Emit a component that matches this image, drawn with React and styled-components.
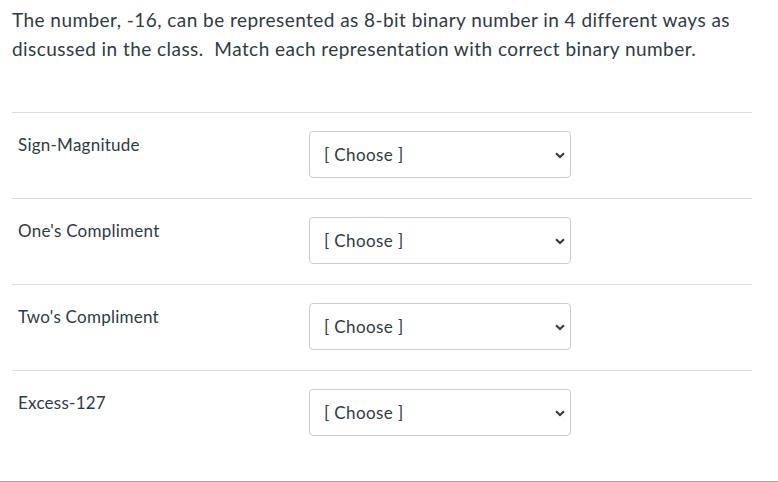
import React from "react";
import styled, { createGlobalStyle } from "styled-components";

const GlobalStyle = createGlobalStyle`
  body {
    margin: 0;
    background: #fff;
    font-family: Lato, "Liberation Sans", sans-serif;
    color: #2d3b45;
  }
`;

const Page = styled.div`
  padding-top: 5px;
`;

const Question = styled.div`
  padding: 0 26px 25px 12px;
`;

const Prompt = styled.p`
  margin: 0 0 49px;
  font-size: 19px;
  line-height: 29px;
  letter-spacing: 0.45px;
`;

const Row = styled.div`
  box-sizing: border-box;
  height: 86px;
  border-top: 1px solid #dcdfe1;
  display: grid;
  grid-template-columns: 291px 262px;
  padding-left: 6px;
`;

const Label = styled.div`
  padding-top: 20px;
  font-size: 17px;
  line-height: 24px;
  letter-spacing: 0.25px;
`;

const SelectWrap = styled.div`
  position: relative;
  margin-top: 18px;
  height: 47px;
`;

const Select = styled.select`
  appearance: none;
  -webkit-appearance: none;
  box-sizing: border-box;
  width: 100%;
  height: 100%;
  border: 1px solid #c7cdd1;
  border-radius: 4px;
  background: #fff;
  padding: 0 30px 0 14px;
  font-family: Lato, "Liberation Sans", sans-serif;
  font-size: 17px;
  letter-spacing: 0.4px;
  color: #2d3b45;
`;

const Chevron = styled.svg`
  position: absolute;
  right: 6px;
  top: 21px;
  pointer-events: none;
`;

const BottomRule = styled.div`
  border-top: 1px solid #a5acb0;
`;

const items = ["Sign-Magnitude", "One's Compliment", "Two's Compliment", "Excess-127"];

const App = () => {
  return (
    <Page>
      <GlobalStyle />
      <Question>
        <Prompt>
          The number, -16, can be represented as 8-bit binary number in 4 different ways as
          discussed in the class.&nbsp; Match each representation with correct binary number.
        </Prompt>
        {items.map((item) => (
          <Row key={item}>
            <Label>{item}</Label>
            <SelectWrap>
              <Select defaultValue="">
                <option value="">[ Choose ]</option>
              </Select>
              <Chevron width="10" height="7" viewBox="0 0 10 7">
                <path d="M1 1.2 L5 5 L9 1.2" fill="none" stroke="#2d3b45" strokeWidth="2" />
              </Chevron>
            </SelectWrap>
          </Row>
        ))}
      </Question>
      <BottomRule />
    </Page>
  );
};

export default App;
